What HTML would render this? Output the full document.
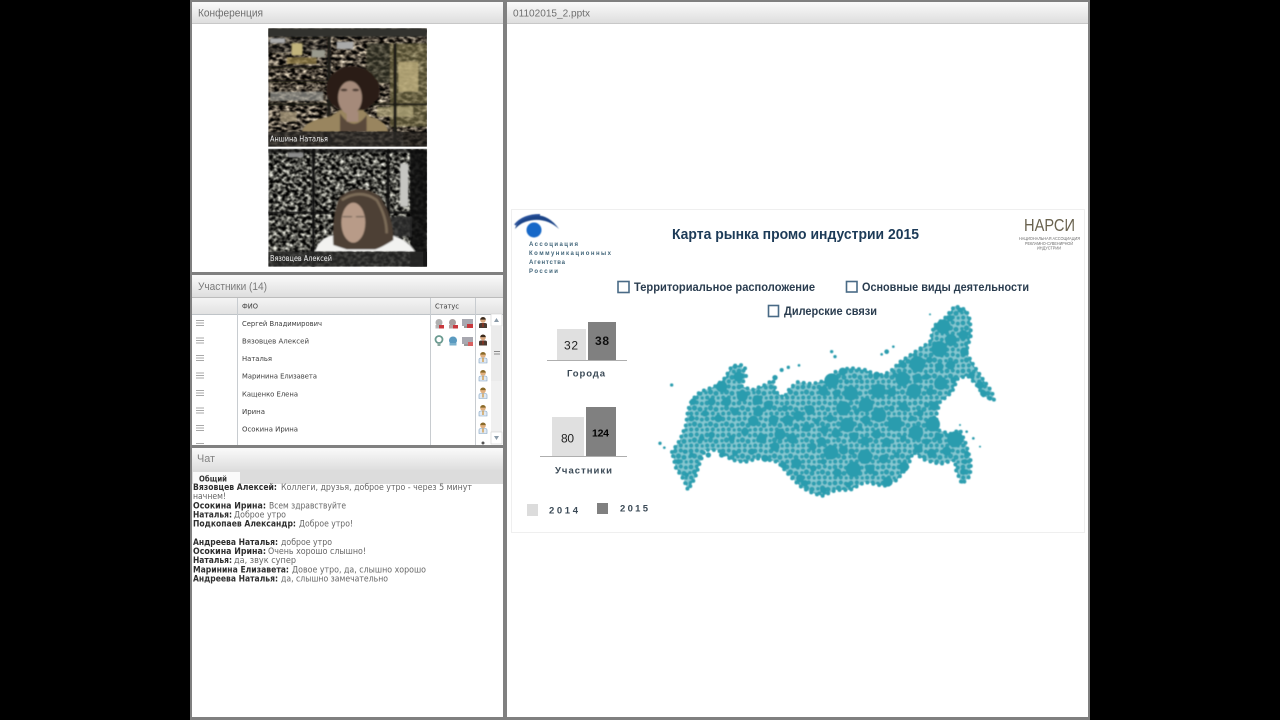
<!DOCTYPE html>
<html><head><meta charset="utf-8"><title>Конференция</title>
<style>
html,body{margin:0;padding:0;background:#000;width:1280px;height:720px;overflow:hidden}
svg{display:block}
text{font-family:"Liberation Sans",sans-serif}
.d{font-family:"DejaVu Sans",sans-serif}
.soft{filter:url(#s)}
</style></head><body>
<svg width="1280" height="720" viewBox="0 0 1280 720" xmlns="http://www.w3.org/2000/svg">
<defs>
<linearGradient id="h" x1="0" y1="0" x2="0" y2="1"><stop offset="0" stop-color="#fafafa"/><stop offset="1" stop-color="#dedede"/></linearGradient>
<linearGradient id="th" x1="0" y1="0" x2="0" y2="1"><stop offset="0" stop-color="#f4f4f4"/><stop offset="1" stop-color="#e2e2e2"/></linearGradient>
<filter id="s" x="-2%" y="-2%" width="104%" height="104%"><feGaussianBlur stdDeviation=".35"/></filter>
<filter id="v" x="0" y="0" width="100%" height="100%"><feGaussianBlur stdDeviation="2"/></filter>
<filter id="lg" x="-5%" y="-5%" width="110%" height="110%"><feGaussianBlur stdDeviation=".4"/></filter>
<filter id="n1" x="0" y="0" width="100%" height="100%" color-interpolation-filters="sRGB"><feTurbulence type="fractalNoise" baseFrequency=".06 .11" numOctaves="3" seed="7"/><feColorMatrix values="2.200 0 0 0 -.8 2.100 0 0 0 -.78 1.900 0 0 0 -.72 0 0 0 0 1"/><feGaussianBlur stdDeviation="1.500"/></filter>
<filter id="n2" x="0" y="0" width="100%" height="100%" color-interpolation-filters="sRGB"><feTurbulence type="fractalNoise" baseFrequency=".08 .1" numOctaves="3" seed="21"/><feColorMatrix values="2.300 0 0 0 -.85 2.300 0 0 0 -.85 2.200 0 0 0 -.82 0 0 0 0 1"/><feGaussianBlur stdDeviation="1.500"/></filter>
<clipPath id="c1"><rect x="235" y="85" width="476" height="355"/></clipPath>
<clipPath id="c2"><rect x="235" y="447" width="476" height="353"/></clipPath>
<pattern id="dots" width="16" height="16" patternUnits="userSpaceOnUse">
<rect width="16" height="16" fill="#86c8d1"/>
<g fill="#2f9fb0"><circle cx="3" cy="3" r="2.500"/><circle cx="8.800" cy="2.500" r="2.200"/><circle cx="13.800" cy="3.600" r="2.100"/><circle cx="1.900" cy="8.700" r="1.800"/><circle cx="6.500" cy="8" r="2.700"/><circle cx="12" cy="9.300" r="2.600"/><circle cx="3.200" cy="13.600" r="2.200"/><circle cx="8.800" cy="13.400" r="2.200"/><circle cx="14.200" cy="14" r="1.700"/></g>
</pattern>
<g id="ham"><rect x="0" y="0" width="8" height="1" fill="#a8a8a8"/><rect x="0" y="2.500" width="8" height="1" fill="#a8a8a8"/><rect x="0" y="5" width="8" height="1" fill="#a8a8a8"/></g>
<g id="pa"><circle cx="5" cy="3" r="2.800" fill="#e0b080"/><path d="M2.200 2.600a2.800 2.600 0 0 1 5.600 0z" fill="#8a6a2a"/><path d="M1 11V7.500Q1 6 3 6h4q2 0 2 1.500V11z" fill="#dfe9f4" stroke="#7ea0c0" stroke-width=".6"/><rect x="4.400" y="6" width="1.200" height="4" fill="#d09030"/></g>
<g id="pb"><circle cx="5" cy="3" r="2.800" fill="#d8a880"/><path d="M2.200 2.600a2.800 2.600 0 0 1 5.600 0z" fill="#3a2a1a"/><path d="M1 11V7.500Q1 6 3 6h4q2 0 2 1.500V11z" fill="#4a3a30"/><rect x="4.400" y="6" width="1.200" height="4" fill="#a03020"/></g>
</defs>

<rect x="0" y="0" width="1280" height="720" fill="#000"/>
<rect x="190" y="0" width="900" height="720" fill="#808080"/>

<!-- Conference panel -->
<rect x="192" y="2" width="311" height="270" fill="#fff"/>
<rect x="192" y="2" width="311" height="21" fill="url(#h)"/>
<rect x="192" y="23" width="311" height="1" fill="#c8c8c8"/>
<g class="soft"><text x="198" y="16.500" font-size="11" fill="#6e6e6e" textLength="65" lengthAdjust="spacingAndGlyphs">Конференция</text></g>

<!-- Videos -->
<g transform="translate(190 0) scale(.33333)">
 <g clip-path="url(#c1)">
  <rect x="235" y="85" width="476" height="355" filter="url(#n1)"/>
  <g filter="url(#v)">
  <rect x="235" y="85" width="476" height="25" fill="#33332e"/>
  <rect x="600" y="130" width="111" height="250" fill="#7a7248" opacity=".65"/>
  <rect x="625" y="185" width="60" height="90" fill="#c4b684" opacity=".75"/>
  <rect x="560" y="320" width="110" height="30" fill="#b8ac80" opacity=".7"/>
  <rect x="530" y="130" width="70" height="120" fill="#3c3a2a" opacity=".65"/>
  <rect x="235" y="110" width="180" height="50" fill="#1d1c18" opacity=".35"/>
  <rect x="240" y="115" width="45" height="14" fill="#aaa"/>
  <rect x="305" y="130" width="32" height="36" fill="#c2b47c"/>
  <rect x="440" y="125" width="50" height="22" fill="#aaa"/>
  <rect x="365" y="150" width="40" height="22" fill="#9a9a8e"/>
  <rect x="290" y="172" width="90" height="20" fill="#a08a50" opacity=".7"/>
  <rect x="240" y="275" width="160" height="28" fill="#9a9a94" opacity=".7"/>
  <rect x="270" y="335" width="50" height="30" fill="#a8987c" opacity=".8"/>
  <rect x="235" y="310" width="476" height="6" fill="#17160f"/>
  <rect x="235" y="240" width="180" height="5" fill="#17160f"/>
  <rect x="235" y="198" width="180" height="5" fill="#17160f"/>
  <rect x="610" y="130" width="10" height="300" fill="#1c1b14"/>
  <rect x="412" y="110" width="10" height="330" fill="#1d1c16"/>
  <ellipse cx="487" cy="268" rx="78" ry="70" fill="#2a1f16"/>
  <ellipse cx="425" cy="270" rx="14" ry="30" fill="#2a1f16"/>
  <ellipse cx="555" cy="270" rx="14" ry="34" fill="#2a1f16"/>
  <path d="M335 395Q345 360 420 350L450 330H520L540 350Q585 360 595 395z" fill="#99855f"/>
  <path d="M450 340Q490 400 530 345V395H450z" fill="#5a4a3a"/>
  <ellipse cx="480" cy="293" rx="36" ry="50" fill="#a58a7a"/>
  <rect x="470" y="335" width="35" height="30" fill="#a58a7a"/>
  <ellipse cx="462" cy="270" rx="10" ry="4" fill="#4a3a30"/><ellipse cx="497" cy="270" rx="10" ry="4" fill="#4a3a30"/>
  </g>
 <rect x="235" y="395" width="405" height="45" fill="#2a2826" fill-opacity=".8"/>
 <rect x="640" y="395" width="71" height="45" fill="#1c1a17" fill-opacity=".75"/>
 </g>
 <rect x="235" y="440" width="476" height="7" fill="#fff"/>
 <g clip-path="url(#c2)">
  <rect x="235" y="447" width="476" height="353" filter="url(#n2)"/>
  <g filter="url(#v)">
  <rect x="630" y="490" width="25" height="130" fill="#c6c6c2"/>
  <rect x="295" y="458" width="45" height="14" fill="#8c8c8c"/>
  <rect x="660" y="450" width="51" height="350" fill="#121212" opacity=".9"/>
  <rect x="235" y="447" width="476" height="12" fill="#111" opacity=".7"/>
  <rect x="235" y="635" width="476" height="6" fill="#111"/>
  <rect x="366" y="447" width="8" height="353" fill="#0c0c0c"/>
  <rect x="590" y="447" width="8" height="300" fill="#111"/>
  <rect x="590" y="650" width="75" height="60" fill="#2a2a2a" opacity=".85"/>
  <path d="M375 755Q385 715 430 705H600Q650 715 675 755z" fill="#f2f2f0"/>
  <path d="M430 735Q425 640 450 590Q510 545 570 590Q610 650 610 720Q570 745 555 748H470z" fill="#4d4034"/>
  <path d="M455 600Q510 565 560 600Q590 650 590 700" fill="none" stroke="#7c6c58" stroke-width="8"/>
  <ellipse cx="490" cy="668" rx="36" ry="60" fill="#b89b88"/>
  <path d="M458 650h28M498 650h24" stroke="#7a6a5c" stroke-width="4"/>
  </g>
 <rect x="235" y="755" width="465" height="45" fill="#2a2a28" fill-opacity=".82"/>
 <rect x="700" y="755" width="11" height="45" fill="#161616"/>
 </g>
</g>
<g class="soft" fill="#eee" font-size="7.500">
<text class="d" x="270" y="141.500" textLength="58" lengthAdjust="spacingAndGlyphs">Аншина Наталья</text>
<text class="d" x="270" y="261" textLength="62" lengthAdjust="spacingAndGlyphs">Вязовцев Алексей</text>
</g>

<!-- Participants panel -->
<rect x="192" y="275" width="311" height="170" fill="#fff"/>
<rect x="192" y="275" width="311" height="22" fill="url(#h)"/>
<rect x="192" y="297" width="311" height="1" fill="#bcbcbc"/>
<rect x="192" y="298" width="311" height="16" fill="url(#th)"/>
<rect x="192" y="314" width="311" height="1" fill="#bfc4c8"/>
<rect x="237" y="298" width="1" height="147" fill="#c8ccd0"/>
<rect x="430" y="298" width="1" height="147" fill="#c8ccd0"/>
<rect x="475" y="298" width="1" height="147" fill="#c8ccd0"/>
<rect x="491" y="314" width="11" height="130" fill="#f0f0f0"/>
<rect x="491" y="314" width="11" height="12" fill="#fff" stroke="#d0d0d0" stroke-width=".6"/>
<rect x="491" y="432" width="11" height="12" fill="#fff" stroke="#d0d0d0" stroke-width=".6"/>
<path d="M494 322l2.500-4 2.500 4z" fill="#8a9aa8"/><path d="M494 436l2.500 4 2.500-4z" fill="#8a9aa8"/>
<rect x="491" y="326" width="11" height="55" fill="#ebebeb"/>
<rect x="494" y="351" width="6" height="1" fill="#888"/><rect x="494" y="353.500" width="6" height="1" fill="#888"/>

<g class="soft">
<text x="198" y="290" font-size="11" fill="#7a7a7a" textLength="69" lengthAdjust="spacingAndGlyphs">Участники (14)</text>
<g fill="#3c3c3c" font-size="7.200">
<text class="d" x="242" y="308.500" textLength="16" lengthAdjust="spacingAndGlyphs">ФИО</text>
<text class="d" x="435" y="308.500" textLength="24" lengthAdjust="spacingAndGlyphs">Статус</text>
<text class="d" x="242" y="326" textLength="80" lengthAdjust="spacingAndGlyphs">Сергей Владимирович</text>
<text class="d" x="242" y="343.500" textLength="67" lengthAdjust="spacingAndGlyphs">Вязовцев Алексей</text>
<text class="d" x="242" y="361" textLength="30" lengthAdjust="spacingAndGlyphs">Наталья</text>
<text class="d" x="242" y="378.500" textLength="75" lengthAdjust="spacingAndGlyphs">Маринина Елизавета</text>
<text class="d" x="242" y="396.500" textLength="56" lengthAdjust="spacingAndGlyphs">Кащенко Елена</text>
<text class="d" x="242" y="414" textLength="23" lengthAdjust="spacingAndGlyphs">Ирина</text>
<text class="d" x="242" y="431.500" textLength="56" lengthAdjust="spacingAndGlyphs">Осокина Ирина</text>
</g>
<use href="#ham" x="196" y="320"/><use href="#ham" x="196" y="337.500"/><use href="#ham" x="196" y="355"/><use href="#ham" x="196" y="372.500"/><use href="#ham" x="196" y="390"/><use href="#ham" x="196" y="407.500"/><use href="#ham" x="196" y="425"/>
<rect x="196" y="443" width="8" height="1" fill="#aaa"/>
<g>
<circle cx="439" cy="322.500" r="3.500" fill="#b0b0b0"/><rect x="435.500" y="325" width="7" height="3.500" fill="#b4b4b4"/><rect x="439" y="325" width="5" height="3.500" fill="#c8383c"/>
<circle cx="452.500" cy="322.500" r="3.500" fill="#a89e9e"/><rect x="449" y="325" width="7" height="3.500" fill="#b4a4a4"/><rect x="453" y="325" width="5" height="3.500" fill="#c8383c"/>
<rect x="462" y="319" width="11" height="7" fill="#a8a8b0"/><rect x="464" y="326" width="7" height="2" fill="#999"/><rect x="467" y="324" width="6" height="4" fill="#c8383c"/>
<circle cx="439" cy="339.500" r="3.500" fill="none" stroke="#6a9a90" stroke-width="1.800"/><rect x="437.500" y="343" width="3" height="3" fill="#8aa8a0"/>
<circle cx="453" cy="340.500" r="4" fill="#5a9ac0"/><rect x="449.500" y="343" width="7" height="2.500" fill="#7ab0cc"/>
<rect x="462" y="337" width="11" height="7" fill="#a8a8b0"/><rect x="464" y="344" width="7" height="2" fill="#999"/><rect x="468" y="342" width="5" height="4" fill="#d86060"/>
</g>
<use href="#pb" x="478" y="317"/><use href="#pb" x="478" y="334.500"/><use href="#pa" x="478" y="352"/><use href="#pa" x="478" y="370"/><use href="#pa" x="478" y="387.500"/><use href="#pa" x="478" y="405"/><use href="#pa" x="478" y="422.500"/>
<circle cx="483" cy="443" r="1.500" fill="#555"/>
</g>

<!-- Chat panel -->
<rect x="192" y="448" width="311" height="269" fill="#fff"/>
<rect x="192" y="448" width="311" height="22" fill="url(#h)"/>
<rect x="192" y="470" width="311" height="14" fill="#dcdcdc"/>
<rect x="193" y="472" width="47" height="13" fill="#fafafa"/>
<g class="soft">
<text x="197" y="462" font-size="11" fill="#828282" textLength="18" lengthAdjust="spacingAndGlyphs">Чат</text>
<text class="d" x="199" y="481.500" font-size="7.500" font-weight="bold" fill="#333" textLength="28" lengthAdjust="spacingAndGlyphs">Общий</text>
<g font-size="9" fill="#2e2e2e" font-weight="bold">
<text class="d" x="193" y="490" textLength="84" lengthAdjust="spacingAndGlyphs">Вязовцев Алексей:</text>
<text class="d" x="193" y="508.500" textLength="73" lengthAdjust="spacingAndGlyphs">Осокина Ирина:</text>
<text class="d" x="193" y="517.500" textLength="39" lengthAdjust="spacingAndGlyphs">Наталья:</text>
<text class="d" x="193" y="526.500" textLength="103" lengthAdjust="spacingAndGlyphs">Подкопаев Александр:</text>
<text class="d" x="193" y="545" textLength="85" lengthAdjust="spacingAndGlyphs">Андреева Наталья:</text>
<text class="d" x="193" y="554" textLength="73" lengthAdjust="spacingAndGlyphs">Осокина Ирина:</text>
<text class="d" x="193" y="563" textLength="39" lengthAdjust="spacingAndGlyphs">Наталья:</text>
<text class="d" x="193" y="572.500" textLength="96" lengthAdjust="spacingAndGlyphs">Маринина Елизавета:</text>
<text class="d" x="193" y="581.500" textLength="85" lengthAdjust="spacingAndGlyphs">Андреева Наталья:</text>
</g>
<g font-size="8.800" fill="#666">
<text class="d" x="281" y="490" textLength="191" lengthAdjust="spacingAndGlyphs">Коллеги, друзья, доброе утро - через 5 минут</text>
<text class="d" x="193" y="499" textLength="33" lengthAdjust="spacingAndGlyphs">начнем!</text>
<text class="d" x="269" y="508.500" textLength="77" lengthAdjust="spacingAndGlyphs">Всем здравствуйте</text>
<text class="d" x="234" y="517.500" textLength="52" lengthAdjust="spacingAndGlyphs">Доброе утро</text>
<text class="d" x="299" y="526.500" textLength="54" lengthAdjust="spacingAndGlyphs">Доброе утро!</text>
<text class="d" x="281" y="545" textLength="51" lengthAdjust="spacingAndGlyphs">доброе утро</text>
<text class="d" x="268" y="554" textLength="98" lengthAdjust="spacingAndGlyphs">Очень хорошо слышно!</text>
<text class="d" x="234" y="563" textLength="62" lengthAdjust="spacingAndGlyphs">да, звук супер</text>
<text class="d" x="292" y="572.500" textLength="134" lengthAdjust="spacingAndGlyphs">Довое утро, да, слышно хорошо</text>
<text class="d" x="281" y="581.500" textLength="107" lengthAdjust="spacingAndGlyphs">да, слышно замечательно</text>
</g>
</g>

<!-- Right panel -->
<rect x="507" y="2" width="581" height="715" fill="#fff"/>
<rect x="507" y="2" width="581" height="21" fill="url(#h)"/>
<rect x="507" y="23" width="581" height="1" fill="#c8c8c8"/>
<g class="soft"><text x="513" y="16.500" font-size="10.500" fill="#6e6e6e" textLength="77" lengthAdjust="spacingAndGlyphs">01102015_2.pptx</text></g>

<!-- Slide -->
<rect x="511.500" y="209.500" width="573" height="323" fill="#fff" stroke="#efefef"/>
<g filter="url(#lg)">
<circle cx="534" cy="230" r="7.500" fill="#1668c8"/>
<path d="M515 229Q517 220 530 216Q547 212 559 229Q548 219 534 220Q522 221 515 229z" fill="#1c4488"/>
<path d="M515 225Q523 215 540 215" fill="none" stroke="#28509a" stroke-width="2"/>
</g>
<g class="soft" font-weight="bold" fill="#3f6478" font-size="6">
<text x="529" y="246" textLength="49">Ассоциация</text>
<text x="529" y="255" textLength="82">Коммуникационных</text>
<text x="529" y="264" textLength="36">Агентства</text>
<text x="529" y="273" textLength="29">России</text>
</g>
<g class="soft">
<text x="672" y="239" font-size="15" font-weight="bold" fill="#1f3b58" textLength="247" lengthAdjust="spacingAndGlyphs">Карта рынка промо индустрии 2015</text>
<text x="1024" y="231" font-size="17.500" fill="#6b6350" textLength="51" lengthAdjust="spacingAndGlyphs">НАРСИ</text>
<g font-size="4.200" fill="#6a6a6a">
<text x="1019" y="240" textLength="61" lengthAdjust="spacingAndGlyphs">НАЦИОНАЛЬНАЯ АССОЦИАЦИЯ</text>
<text x="1025" y="245" textLength="48" lengthAdjust="spacingAndGlyphs">РЕКЛАМНО-СУВЕНИРНОЙ</text>
<text x="1037" y="249.500" textLength="24" lengthAdjust="spacingAndGlyphs">ИНДУСТРИИ</text>
</g>
<g fill="none" stroke="#4a6a86" stroke-width="1.600">
<rect x="618" y="281.500" width="11" height="11"/>
<rect x="846.500" y="281.500" width="10.500" height="10.500"/>
<rect x="768.500" y="305.500" width="10" height="11"/>
</g>
<g font-size="12" font-weight="bold" fill="#2a3c50">
<text x="634" y="291" textLength="181" lengthAdjust="spacingAndGlyphs">Территориальное расположение</text>
<text x="862" y="291" textLength="167" lengthAdjust="spacingAndGlyphs">Основные виды деятельности</text>
<text x="784" y="315" textLength="93" lengthAdjust="spacingAndGlyphs">Дилерские связи</text>
</g>
<rect x="557" y="329" width="29" height="31" fill="#e0e0e0"/>
<rect x="588" y="322" width="28" height="38" fill="#808080"/>
<rect x="547" y="360" width="80" height="1" fill="#aeaeae"/>
<rect x="552" y="417" width="32" height="39" fill="#e0e0e0"/>
<rect x="586" y="407" width="30" height="49" fill="#808080"/>
<rect x="540" y="456" width="87" height="1" fill="#aeaeae"/>
<text x="564" y="349.500" font-size="12" fill="#222" textLength="14">32</text>
<text x="595" y="345" font-size="12" font-weight="bold" fill="#111" textLength="14">38</text>
<text x="561" y="442.500" font-size="12" fill="#222" textLength="13">80</text>
<text x="592" y="436.500" font-size="10.500" font-weight="bold" fill="#000" textLength="17">124</text>
<g font-size="9.500" font-weight="bold" fill="#3a4a56">
<text x="567" y="376.500" textLength="38">Города</text>
<text x="555" y="473.500" textLength="57">Участники</text>
<text x="549" y="513.500" textLength="29">2014</text>
<text x="620" y="511.500" textLength="28">2015</text>
</g>
<rect x="527" y="504" width="11" height="12" fill="#dcdcdc"/>
<rect x="597" y="503" width="11" height="11" fill="#808080"/>
</g>

<!-- Map -->
<g filter="url(#lg)">
<path fill="url(#dots)" stroke="#2f9fb0" stroke-width="4" stroke-linecap="round" stroke-dasharray="0 6" d="M672 452 L680 440 L686 425 L688 410 L692 400 L700 392 L716 386 L725 378 L732 366 L741 365 L746 376 L741 386 L752 390 L765 385 L773 380 L776 392 L784 398 L790 388 L798 382 L812 384 L828 380 L835 372 L850 368 L866 370 L878 376 L890 372 L900 362 L918 350 L930 342 L934 326 L945 318 L955 306 L966 310 L970 320 L971 335 L966 352 L974 366 L982 378 L992 392 L994 400 L984 396 L976 384 L968 376 L958 378 L952 392 L940 402 L936 416 L938 430 L950 434 L960 430 L966 444 L971 462 L970 476 L962 484 L956 470 L955 460 L940 464 L925 460 L913 452 L908 466 L897 480 L884 486 L865 482 L850 490 L836 490 L822 496 L810 492 L800 486 L790 476 L778 462 L760 458 L745 462 L732 460 L718 450 L705 450 L700 462 L695 478 L688 490 L684 480 L676 468 Z"/>
<g fill="#2b9cae">
<g transform="translate(780 205) scale(.33333)">
<circle cx="490" cy="365" r="22"/><circle cx="478" cy="432" r="24"/><circle cx="513" cy="405" r="18"/><circle cx="550" cy="390" r="15"/><circle cx="553" cy="440" r="13"/><circle cx="412" cy="477" r="24"/><circle cx="368" cy="522" r="22"/><circle cx="402" cy="558" r="22"/><circle cx="482" cy="535" r="20"/><circle cx="412" cy="520" r="14"/><circle cx="478" cy="485" r="13"/><circle cx="512" cy="480" r="14"/><circle cx="155" cy="527" r="22"/><circle cx="212" cy="565" r="22"/><circle cx="295" cy="558" r="22"/><circle cx="258" cy="600" r="22"/><circle cx="190" cy="610" r="22"/><circle cx="297" cy="630" r="22"/><circle cx="345" cy="657" r="22"/><circle cx="202" cy="660" r="22"/><circle cx="408" cy="683" r="22"/><circle cx="458" cy="658" r="22"/><circle cx="525" cy="703" r="24"/><circle cx="153" cy="742" r="22"/><circle cx="255" cy="755" r="22"/><circle cx="220" cy="793" r="23"/><circle cx="323" cy="830" r="15"/><circle cx="372" cy="785" r="15"/><circle cx="270" cy="792" r="14"/><circle cx="320" cy="712" r="14"/><circle cx="462" cy="603" r="14"/><circle cx="370" cy="605" r="14"/><circle cx="335" cy="562" r="14"/><circle cx="258" cy="645" r="14"/><circle cx="130" cy="558" r="15"/><circle cx="170" cy="565" r="12"/><circle cx="90" cy="615" r="15"/><circle cx="20" cy="645" r="14"/><circle cx="80" cy="668" r="13"/><circle cx="133" cy="675" r="13"/><circle cx="168" cy="685" r="14"/><circle cx="222" cy="695" r="14"/><circle cx="290" cy="688" r="14"/><circle cx="255" cy="708" r="14"/><circle cx="190" cy="735" r="14"/><circle cx="125" cy="710" r="14"/><circle cx="98" cy="725" r="12"/><circle cx="37" cy="702" r="14"/><circle cx="48" cy="775" r="14"/><circle cx="172" cy="803" r="13"/><circle cx="310" cy="762" r="14"/><circle cx="415" cy="732" r="13"/><circle cx="455" cy="745" r="14"/><circle cx="500" cy="738" r="14"/><circle cx="475" cy="695" r="12"/><circle cx="440" cy="710" r="10"/><circle cx="575" cy="510" r="10"/><circle cx="600" cy="540" r="12"/><circle cx="610" cy="565" r="10"/><circle cx="630" cy="580" r="7"/><circle cx="510" cy="340" r="10"/><circle cx="540" cy="315" r="8"/><circle cx="188" cy="500" r="12"/><circle cx="290" cy="510" r="10"/><circle cx="370" cy="480" r="10"/><circle cx="448" cy="465" r="10"/><circle cx="450" cy="560" r="12"/><circle cx="462" cy="640" r="8"/><circle cx="75" cy="835" r="10"/><circle cx="130" cy="855" r="10"/><circle cx="205" cy="840" r="9"/><circle cx="550" cy="800" r="10"/><circle cx="555" cy="770" r="8"/><circle cx="560" cy="745" r="8"/><circle cx="370" cy="700" r="10"/><circle cx="345" cy="510" r="8"/><circle cx="240" cy="670" r="8"/><circle cx="335" cy="610" r="9"/><circle cx="420" cy="625" r="11"/><circle cx="395" cy="640" r="9"/><circle cx="440" cy="600" r="8"/><circle cx="230" cy="620" r="9"/><circle cx="150" cy="640" r="12"/><circle cx="110" cy="650" r="9"/><circle cx="60" cy="630" r="10"/><circle cx="50" cy="665" r="9"/><circle cx="215" cy="740" r="10"/><circle cx="350" cy="750" r="9"/><circle cx="285" cy="805" r="8"/><circle cx="100" cy="790" r="10"/><circle cx="130" cy="770" r="9"/><circle cx="440" cy="515" r="10"/><circle cx="520" cy="525" r="9"/><circle cx="245" cy="530" r="7"/><circle cx="200" cy="530" r="8"/>
<circle cx="450" cy="328" r="3"/><circle cx="155" cy="440" r="5"/><circle cx="165" cy="455" r="5"/><circle cx="320" cy="440" r="7"/><circle cx="340" cy="425" r="4"/><circle cx="305" cy="448" r="4"/><circle cx="540" cy="660" r="3"/><circle cx="560" cy="680" r="4"/><circle cx="580" cy="700" r="4"/><circle cx="600" cy="725" r="3"/>
</g>
<g transform="translate(505 205) scale(.33333)">
<circle cx="700" cy="515" r="15"/><circle cx="650" cy="545" r="17"/><circle cx="712" cy="573" r="17"/><circle cx="757" cy="585" r="15"/><circle cx="790" cy="600" r="14"/><circle cx="760" cy="620" r="15"/><circle cx="745" cy="648" r="16"/><circle cx="805" cy="645" r="15"/><circle cx="850" cy="645" r="15"/><circle cx="880" cy="632" r="15"/><circle cx="825" cy="688" r="17"/><circle cx="860" cy="700" r="15"/><circle cx="770" cy="700" r="15"/><circle cx="810" cy="725" r="14"/><circle cx="875" cy="775" r="15"/><circle cx="665" cy="590" r="14"/><circle cx="620" cy="590" r="12"/><circle cx="565" cy="590" r="10"/><circle cx="690" cy="620" r="12"/><circle cx="640" cy="640" r="12"/><circle cx="600" cy="625" r="10"/><circle cx="560" cy="640" r="9"/><circle cx="720" cy="680" r="12"/><circle cx="680" cy="700" r="10"/><circle cx="620" cy="690" r="10"/><circle cx="780" cy="760" r="11"/><circle cx="835" cy="780" r="10"/><circle cx="740" cy="740" r="10"/><circle cx="690" cy="745" r="9"/><circle cx="650" cy="750" r="8"/><circle cx="590" cy="700" r="9"/><circle cx="610" cy="750" r="8"/><circle cx="560" cy="750" r="8"/><circle cx="520" cy="770" r="8"/><circle cx="545" cy="810" r="7"/><circle cx="885" cy="820" r="12"/><circle cx="840" cy="610" r="10"/><circle cx="540" cy="740" r="7"/><circle cx="690" cy="485" r="7"/><circle cx="720" cy="490" r="6"/>
<circle cx="810" cy="518" r="8"/><circle cx="830" cy="495" r="6"/><circle cx="850" cy="487" r="5"/><circle cx="882" cy="481" r="4"/><circle cx="465" cy="715" r="5"/><circle cx="478" cy="728" r="4"/><circle cx="500" cy="540" r="5"/>
</g>
</g>
</g>
</svg>
</body></html>
